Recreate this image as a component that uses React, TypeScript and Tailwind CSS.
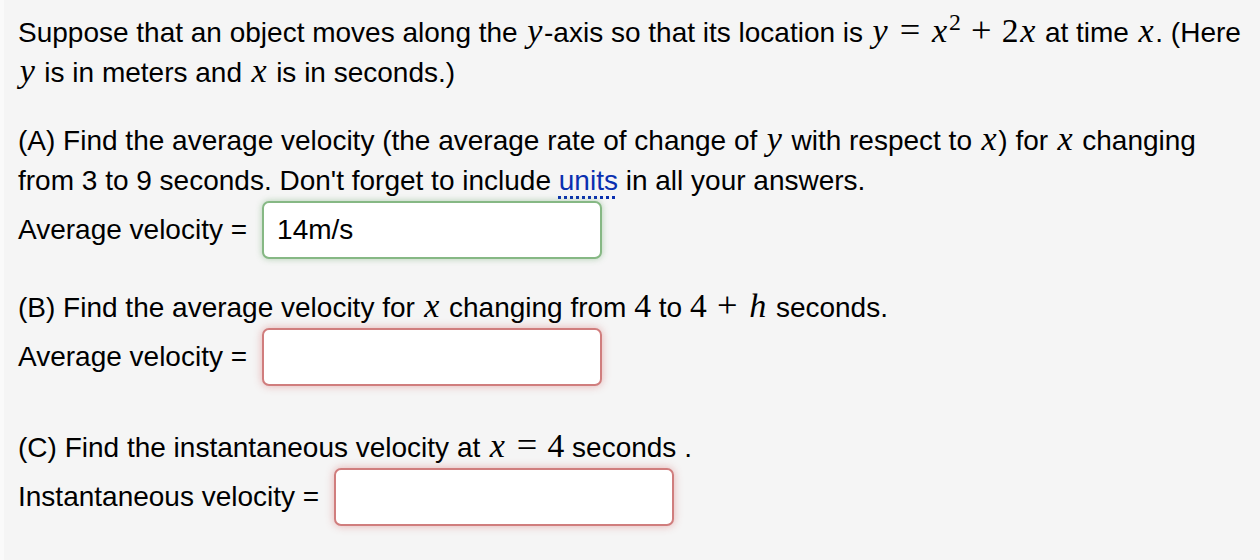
import React from 'react';

// 수식 조각: 이탤릭 변수
const V = ({ children }: { children: React.ReactNode }) => (
  <span className="font-['Liberation_Serif',serif] italic text-[1.22em] leading-[0] px-[0.05em]">{children}</span>
);

// 숫자와 연산자는 세리프 정체
const N = ({ children }: { children: React.ReactNode }) => (
  <span className="font-['Liberation_Serif',serif] text-[1.2em] leading-[0]">{children}</span>
);

const Op = ({ children }: { children: React.ReactNode }) => (
  <span className="font-['Liberation_Serif',serif] text-[1.3em] leading-[0] mx-[0.28em]">{children}</span>
);

const AnswerBox = ({ value, status }: { value?: string; status: 'correct' | 'wrong' }) => (
  <div
    className={
      status === 'correct'
        ? 'w-[340px] h-[58px] shrink-0 bg-white rounded-[7px] border-2 border-[#86b884] shadow-[0_0_6px_rgba(90,160,90,0.45)] flex items-center px-[13px]'
        : 'w-[340px] h-[58px] shrink-0 bg-white rounded-[7px] border-2 border-[#d07d7d] shadow-[0_0_8px_rgba(210,90,90,0.45)] flex items-center px-[13px]'
    }
  >
    {value}
  </div>
);

export default function App() {
  return (
    <div className="w-[1260px] h-[560px] bg-[#f5f5f5] text-black font-['Liberation_Sans',Arial,sans-serif] text-[28px] leading-[40px] pl-[14px] pt-[13px] border-l-4 border-[#fafafa] overflow-hidden">
      <p className="whitespace-nowrap">
        Suppose that an object moves along the <V>y</V>-axis so that its location is <V>y</V>
        <Op>=</Op>
        <V>x</V>
        <sup className="font-['Liberation_Serif',serif] text-[0.85em] leading-[0]">2</sup>
        <Op>+</Op>
        <N>2</N>
        <V>x</V> at time <V>x</V>. (Here
        <br />
        <V>y</V> is in meters and <V>x</V> is in seconds.)
      </p>

      <p className="mt-[28px] whitespace-nowrap">
        (A) Find the average velocity (the average rate of change of <V>y</V> with respect to <V>x</V>) for <V>x</V> changing
        <br />
        from 3 to 9 seconds. Don't forget to include{' '}
        <span className="text-[#0a2fb0] underline decoration-dotted decoration-[3px] underline-offset-[6px]">units</span> in all your
        answers.
      </p>
      <div className="flex items-center gap-[15px] h-[58px]">
        <span>Average velocity =</span>
        <AnswerBox value="14m/s" status="correct" />
      </div>

      <p className="mt-[29px] whitespace-nowrap">
        (B) Find the average velocity for <V>x</V> changing from <N>4</N> to <N>4</N>
        <Op>+</Op>
        <V>h</V> seconds.
      </p>
      <div className="flex items-center gap-[15px] h-[58px]">
        <span>Average velocity =</span>
        <AnswerBox status="wrong" />
      </div>

      <p className="mt-[42px] whitespace-nowrap">
        (C) Find the instantaneous velocity at <V>x</V>
        <Op>=</Op>
        <N>4</N> seconds .
      </p>
      <div className="flex items-center gap-[15px] h-[58px]">
        <span>Instantaneous velocity =</span>
        <AnswerBox status="wrong" />
      </div>
    </div>
  );
}
